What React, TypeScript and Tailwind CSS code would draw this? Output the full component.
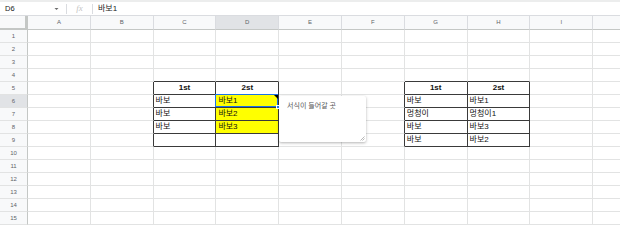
const COLS = ["A", "B", "C", "D", "E", "F", "G", "H", "I", ""];
const ROWS = Array.from({ length: 15 }, (_, i) => i + 1);

type Cell = { v: string; bold?: boolean; yellow?: boolean };

const DATA: Record<string, Cell> = {
  C5: { v: "1st", bold: true },
  D5: { v: "2st", bold: true },
  C6: { v: "바보" },
  D6: { v: "바보1", yellow: true },
  C7: { v: "바보" },
  D7: { v: "바보2", yellow: true },
  C8: { v: "바보" },
  D8: { v: "바보3", yellow: true },
  G5: { v: "1st", bold: true },
  H5: { v: "2st", bold: true },
  G6: { v: "바보" },
  H6: { v: "바보1" },
  G7: { v: "멍청이" },
  H7: { v: "멍청이1" },
  G8: { v: "바보" },
  H8: { v: "바보3" },
  G9: { v: "바보" },
  H9: { v: "바보2" },
};

const inTable = (c: number, r: number) =>
  r >= 5 && r <= 9 && (c === 2 || c === 3 || c === 6 || c === 7);

function GridCell({ c, r }: { c: number; r: number }) {
  const key = COLS[c] + r;
  const cell = DATA[key];
  const rightDark = inTable(c, r) || inTable(c + 1, r);
  const bottomDark = inTable(c, r) || inTable(c, r + 1);
  const selected = key === "D6";

  return (
    <div
      className={`relative flex items-center px-[2px] text-[8px] leading-none text-[#111] border-b ${
        c === 9 ? "" : "border-r"
      } ${rightDark ? "border-r-[#3a3a3a]" : "border-r-[#e2e3e3]"} ${
        bottomDark ? "border-b-[#3a3a3a]" : "border-b-[#e2e3e3]"
      } ${cell?.yellow ? "bg-[#ffff00]" : "bg-white"} ${
        cell?.bold ? "justify-center font-bold text-[7px]" : ""
      }`}
    >
      {cell?.v}
      {selected && (
        <>
          <div className="absolute -left-[1px] -top-[1px] right-0 bottom-0 border-[1.5px] border-[#1a73e8]" />
          <div className="absolute z-10 -right-[2px] -bottom-[2px] w-[4px] h-[4px] bg-[#1a73e8] border border-white" />
          <div className="absolute z-10 right-0 top-0 w-0 h-0 border-t-[4px] border-l-[4px] border-t-black border-l-transparent" />
        </>
      )}
    </div>
  );
}

export default function App() {
  return (
    <div
      className="relative w-[620px] h-[226px] overflow-hidden bg-white"
      style={{ fontFamily: '"Liberation Sans", "Noto Sans CJK KR", sans-serif' }}
    >
      {/* formula bar */}
      <div className="h-[16px] flex items-center border-t-2 border-t-[#eceded] border-b border-b-[#dadce0] text-[7.5px] text-[#222]">
        <div className="w-[66px] flex items-center justify-between pl-[5px] pr-[7px]">
          <span className="font-medium">D6</span>
          <svg width="5" height="4" viewBox="0 0 5 4">
            <path d="M0.5 1 L2.5 3 L4.5 1 Z" fill="#6b6b6b" />
          </svg>
        </div>
        <div className="w-px h-[10px] bg-[#dadce0]" />
        <div
          className="w-[25px] text-center text-[9px] italic text-[#c4c4c4]"
          style={{ fontFamily: '"Liberation Serif", serif' }}
        >
          fx
        </div>
        <div className="w-px h-[10px] bg-[#dadce0]" />
        <div className="pl-[5px] text-[8px]">바보1</div>
      </div>

      {/* grid */}
      <div className="grid grid-cols-[28px_repeat(9,62.8px)_1fr] grid-rows-[14px_repeat(15,13px)]">
        <div className="bg-[#f8f9fa] border-r-[3px] border-r-[#c4c7c5] border-b-[2px] border-b-[#c4c7c5]" />
        {COLS.map((col, i) => (
          <div
            key={col + i}
            className={`flex items-center justify-center text-[6px] text-[#5f6368] border-b border-b-[#c4c7c5] ${
              i === 9 ? "" : "border-r border-r-[#dadce0]"
            } ${col === "D" ? "bg-[#e1e3e6]" : "bg-[#f8f9fa]"}`}
          >
            {col}
          </div>
        ))}
        {ROWS.map((r) => (
          <div key={r} className="contents">
            <div
              className={`flex items-center justify-center text-[6px] text-[#5f6368] border-r border-r-[#c4c7c5] border-b border-b-[#e2e3e3] ${
                r === 6 ? "bg-[#e1e3e6]" : "bg-[#f8f9fa]"
              }`}
            >
              {r}
            </div>
            {COLS.map((_, c) => (
              <GridCell key={c} c={c} r={r} />
            ))}
          </div>
        ))}
      </div>

      {/* note popup */}
      <div className="absolute left-[279px] top-[96px] w-[87px] h-[46px] bg-white rounded-[2px] shadow-[0_1px_3px_rgba(0,0,0,0.3)] px-[8px] pt-[5px] text-[7px] text-[#555]">
        서식이 들어갈 곳
        <svg className="absolute right-[1px] bottom-[1px]" width="5" height="5" viewBox="0 0 5 5">
          <path d="M4.5 0.5 L0.5 4.5 M4.5 2.5 L2.5 4.5" stroke="#888" strokeWidth="0.6" />
        </svg>
      </div>
    </div>
  );
}
